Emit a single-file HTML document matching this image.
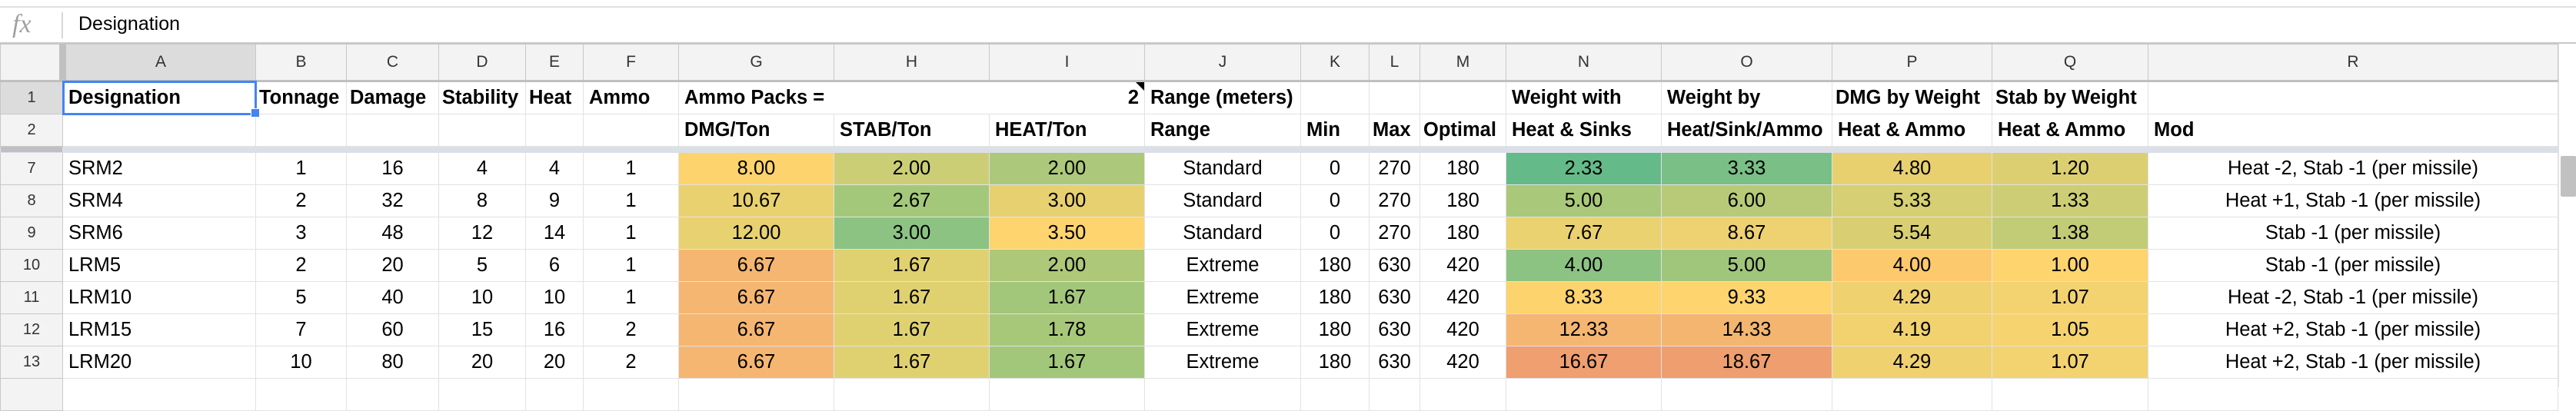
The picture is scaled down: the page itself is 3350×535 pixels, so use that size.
<!DOCTYPE html>
<html><head><meta charset="utf-8"><style>
body{margin:0;width:3350px;height:504px;overflow:hidden;background:#fff;font-family:"Liberation Sans",Arial,sans-serif;position:relative}
.top{position:absolute;left:0;top:0;width:3350px;height:8px;border-bottom:2px solid #e0e0e0}
.fb{position:absolute;left:0;top:10px;width:3350px;height:45px;border-bottom:2px solid #c8c8c8}
.fx{position:absolute;left:16px;top:3px;font-family:"Liberation Serif",serif;font-style:italic;font-size:34px;color:#a0a0a0}
.sep{position:absolute;left:80px;top:6px;width:2px;height:34px;background:#d8d8d8}
.fbt{position:absolute;left:102px;top:7px;font-size:25px;color:#000}
table{position:absolute;left:0;top:57px;border-collapse:collapse;table-layout:fixed;font-size:25.5px}
td{padding:0 7px;white-space:nowrap;overflow:visible;border:1px solid #e2e2e2;color:#000}
tr.ch td{height:46px;background:#f3f3f3;color:#333;text-align:center;font-size:21px;border-color:#c8c8c8;border-bottom:3px solid #c0c0c0}
tr.r td{height:41px}
td.rh{background:#f3f3f3;color:#333;text-align:center;font-size:20px;border-color:#c8c8c8}
.b{font-weight:bold}
.c{text-align:center}
tr.fz td{height:7px;background:#dadfe8;border-color:#dadfe8;padding:0}
tr.fz td.rh{background:#c0c0c0}
</style></head><body>
<div class="top"></div>
<div class="fb"><div class="fx">fx</div><div class="sep"></div><div class="fbt">Designation</div></div>
<table>
<colgroup><col style="width:81px"><col style="width:251px"><col style="width:118px"><col style="width:120px"><col style="width:113px"><col style="width:75px"><col style="width:124px"><col style="width:202px"><col style="width:202px"><col style="width:202px"><col style="width:203px"><col style="width:89px"><col style="width:66px"><col style="width:112px"><col style="width:202px"><col style="width:222px"><col style="width:208px"><col style="width:203px"><col style="width:533px"></colgroup>
<tr class="ch"><td style="border-right:9px solid #c0c0c0"></td><td style="background:#dcdcdc">A</td><td>B</td><td>C</td><td>D</td><td>E</td><td>F</td><td>G</td><td>H</td><td>I</td><td>J</td><td>K</td><td>L</td><td>M</td><td>N</td><td>O</td><td>P</td><td>Q</td><td>R</td></tr>
<tr class="r b"><td class="rh" style="background:#dcdcdc;font-weight:normal">1</td><td style="outline:3px solid #4285f4;outline-offset:-2px">Designation</td><td style="padding:0 4px">Tonnage</td><td style="padding:0 4px">Damage</td><td style="padding:0 4px">Stability</td><td style="padding:0 4px">Heat</td><td>Ammo</td><td style="border-right-color:#fff">Ammo Packs =</td><td style="border-right-color:#fff"></td><td style="text-align:right;position:relative">2<div style="position:absolute;right:0;top:0;width:0;height:0;border-top:11px solid #000;border-left:11px solid transparent"></div></td><td>Range (meters)</td><td></td><td></td><td></td><td>Weight with</td><td>Weight by</td><td style="padding:0 4px">DMG by Weight</td><td style="padding:0 4px">Stab by Weight</td><td></td></tr>
<tr class="r b"><td class="rh" style="font-weight:normal">2</td><td></td><td></td><td></td><td></td><td></td><td></td><td>DMG/Ton</td><td>STAB/Ton</td><td>HEAT/Ton</td><td>Range</td><td>Min</td><td style="padding:0 4px">Max</td><td style="padding:0 4px">Optimal</td><td>Heat &amp; Sinks</td><td>Heat/Sink/Ammo</td><td>Heat &amp; Ammo</td><td>Heat &amp; Ammo</td><td>Mod</td></tr>
<tr class="fz"><td class="rh"></td><td></td><td></td><td></td><td></td><td></td><td></td><td></td><td></td><td></td><td></td><td></td><td></td><td></td><td></td><td></td><td></td><td></td><td></td></tr>
<tr class="r c"><td class="rh">7</td><td style="text-align:left">SRM2</td><td>1</td><td>16</td><td>4</td><td>4</td><td>1</td><td style="background:#fdd36d">8.00</td><td style="background:#ccce76">2.00</td><td style="background:#acc87a">2.00</td><td>Standard</td><td>0</td><td>270</td><td>180</td><td style="background:#64bb89">2.33</td><td style="background:#79bf86">3.33</td><td style="background:#e8d06f">4.80</td><td style="background:#dbcf72">1.20</td><td>Heat -2, Stab -1 (per missile)</td></tr>
<tr class="r c"><td class="rh">8</td><td style="text-align:left">SRM4</td><td>2</td><td>32</td><td>8</td><td>9</td><td>1</td><td style="background:#e9d16f">10.67</td><td style="background:#a4c87a">2.67</td><td style="background:#e7d070">3.00</td><td>Standard</td><td>0</td><td>270</td><td>180</td><td style="background:#aac879">5.00</td><td style="background:#b8ca77">6.00</td><td style="background:#d6cf73">5.33</td><td style="background:#cdcd75">1.33</td><td>Heat +1, Stab -1 (per missile)</td></tr>
<tr class="r c"><td class="rh">9</td><td style="text-align:left">SRM6</td><td>3</td><td>48</td><td>12</td><td>14</td><td>1</td><td style="background:#e8d171">12.00</td><td style="background:#8cc383">3.00</td><td style="background:#fed46e">3.50</td><td>Standard</td><td>0</td><td>270</td><td>180</td><td style="background:#ead271">7.67</td><td style="background:#eed272">8.67</td><td style="background:#d9cf72">5.54</td><td style="background:#c2cc77">1.38</td><td>Stab -1 (per missile)</td></tr>
<tr class="r c"><td class="rh">10</td><td style="text-align:left">LRM5</td><td>2</td><td>20</td><td>5</td><td>6</td><td>1</td><td style="background:#f5b672">6.67</td><td style="background:#e0d170">1.67</td><td style="background:#adc879">2.00</td><td>Extreme</td><td>180</td><td>630</td><td>420</td><td style="background:#8cc383">4.00</td><td style="background:#a0c67c">5.00</td><td style="background:#fdc96d">4.00</td><td style="background:#fed46e">1.00</td><td>Stab -1 (per missile)</td></tr>
<tr class="r c"><td class="rh">11</td><td style="text-align:left">LRM10</td><td>5</td><td>40</td><td>10</td><td>10</td><td>1</td><td style="background:#f5b672">6.67</td><td style="background:#e0d170">1.67</td><td style="background:#a3c77a">1.67</td><td>Extreme</td><td>180</td><td>630</td><td>420</td><td style="background:#fdd36d">8.33</td><td style="background:#fed46e">9.33</td><td style="background:#f0d170">4.29</td><td style="background:#f3d270">1.07</td><td>Heat -2, Stab -1 (per missile)</td></tr>
<tr class="r c"><td class="rh">12</td><td style="text-align:left">LRM15</td><td>7</td><td>60</td><td>15</td><td>16</td><td>2</td><td style="background:#f5b672">6.67</td><td style="background:#e0d170">1.67</td><td style="background:#a8c879">1.78</td><td>Extreme</td><td>180</td><td>630</td><td>420</td><td style="background:#f5b672">12.33</td><td style="background:#f3b56f">14.33</td><td style="background:#f2d16f">4.19</td><td style="background:#f7d36f">1.05</td><td>Heat +2, Stab -1 (per missile)</td></tr>
<tr class="r c"><td class="rh">13</td><td style="text-align:left">LRM20</td><td>10</td><td>80</td><td>20</td><td>20</td><td>2</td><td style="background:#f5b672">6.67</td><td style="background:#e0d170">1.67</td><td style="background:#a3c77a">1.67</td><td>Extreme</td><td>180</td><td>630</td><td>420</td><td style="background:#ef9f70">16.67</td><td style="background:#ee9e6f">18.67</td><td style="background:#f0d170">4.29</td><td style="background:#f3d270">1.07</td><td>Heat +2, Stab -1 (per missile)</td></tr>
<tr class="r c"><td class="rh"></td><td></td><td></td><td></td><td></td><td></td><td></td><td></td><td></td><td></td><td></td><td></td><td></td><td></td><td></td><td></td><td></td><td></td><td></td></tr>
</table>
<div style="position:absolute;left:326px;top:141px;width:10px;height:10px;background:#4285f4;border:1px solid #fff"></div>
<div style="position:absolute;left:3327px;top:57px;width:23px;height:447px;background:#fff;border-left:1px solid #e2e2e2"></div>
<div style="position:absolute;left:3330px;top:203px;width:20px;height:53px;background:#c1c1c1;border-radius:2px"></div>
</body></html>
